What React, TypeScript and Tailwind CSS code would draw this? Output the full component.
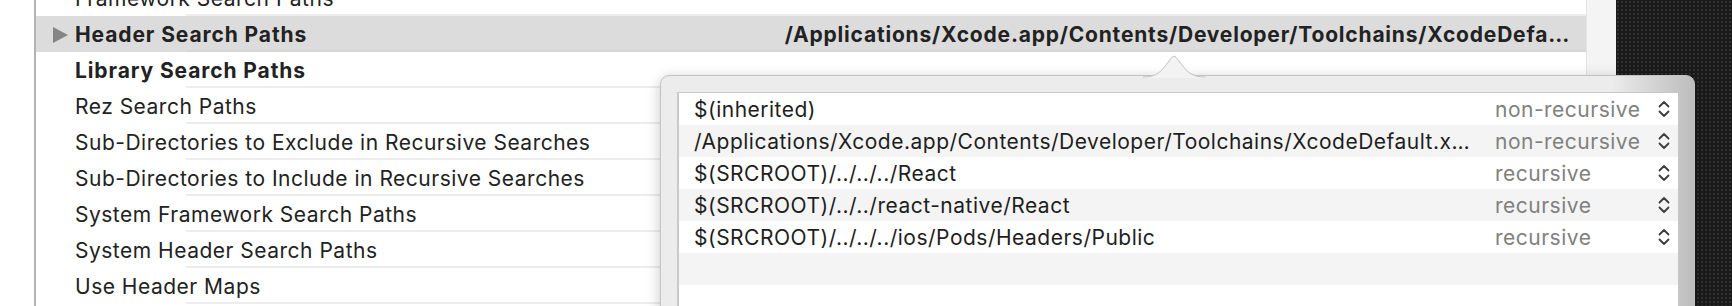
import React from 'react';

type SettingRow = {
  label: string;
  bold?: boolean;
  selected?: boolean;
  value?: string;
};

type PathRow = {
  path: string;
  mode: string;
};

const settings: SettingRow[] = [
  { label: 'Framework Search Paths' },
  {
    label: 'Header Search Paths',
    bold: true,
    selected: true,
    value: '/Applications/Xcode.app/Contents/Developer/Toolchains/XcodeDefa…',
  },
  { label: 'Library Search Paths', bold: true },
  { label: 'Rez Search Paths' },
  { label: 'Sub-Directories to Exclude in Recursive Searches' },
  { label: 'Sub-Directories to Include in Recursive Searches' },
  { label: 'System Framework Search Paths' },
  { label: 'System Header Search Paths' },
  { label: 'Use Header Maps' },
  { label: '' },
];

const paths: PathRow[] = [
  { path: '$(inherited)', mode: 'non-recursive' },
  { path: '/Applications/Xcode.app/Contents/Developer/Toolchains/XcodeDefault.x…', mode: 'non-recursive' },
  { path: '$(SRCROOT)/../../../React', mode: 'recursive' },
  { path: '$(SRCROOT)/../../react-native/React', mode: 'recursive' },
  { path: '$(SRCROOT)/../../../ios/Pods/Headers/Public', mode: 'recursive' },
  { path: '', mode: '' },
  { path: '', mode: '' },
  { path: '', mode: '' },
];

const Stepper: React.FC = () => (
  <svg width="14" height="20" viewBox="0 0 14 20" fill="none">
    <path d="M2.5 7.5L7 3L11.5 7.5" stroke="#3c3c3c" strokeWidth="1.8" strokeLinecap="round" strokeLinejoin="round" />
    <path d="M2.5 12.5L7 17L11.5 12.5" stroke="#3c3c3c" strokeWidth="1.8" strokeLinecap="round" strokeLinejoin="round" />
  </svg>
);

const Disclosure: React.FC = () => (
  <svg width="15" height="16" viewBox="0 0 15 16">
    <path d="M0 0L15 8L0 16Z" fill="#858585" />
  </svg>
);

const PathsPopover: React.FC = () => (
  <div className="absolute left-[660px] top-[75px] h-[250px] w-[1035px] rounded-t-[9px] border border-[#c2c2c2] bg-[linear-gradient(to_right,#ececec_0%,#ececec_92%,#bdbdbd_100%)] px-[16px] pt-[16px] shadow-[0_3px_14px_rgba(0,0,0,0.22)]">
    {/* arrow pointing at the selected row */}
    <svg
      className="absolute left-[482px] top-[-21px]"
      width="62"
      height="23"
      viewBox="0 0 62 23"
    >
      <path
        d="M0 22C12 22 17 18 23 10L29 2.2Q31 0 33 2.2L39 10C45 18 50 22 62 22L62 23L0 23Z"
        fill="#f3f3f3"
      />
      <path
        d="M0 22C12 22 17 18 23 10L29 2.2Q31 0 33 2.2L39 10C45 18 50 22 62 22"
        fill="none"
        stroke="#c2c2c2"
        strokeWidth="1"
      />
    </svg>

    <div className="h-full border-l-[2px] border-t border-[#c9c9c9] bg-white">
      {paths.map((row, i) => (
        <div
          key={i}
          className={`flex h-[32px] items-center text-[21px] tracking-[0.5px] ${i % 2 === 1 ? 'bg-[#f4f4f4]' : 'bg-white'}`}
        >
          <div className="min-w-0 flex-1 whitespace-nowrap pl-[15px] pt-[2px] text-[#1e1e1e]">{row.path}</div>
          <div className="w-[150px] whitespace-nowrap pt-[2px] text-[#808080]">{row.mode}</div>
          <div className="ml-[12px] mr-[7px] flex w-[14px] items-center justify-center">
            {row.mode && <Stepper />}
          </div>
        </div>
      ))}
    </div>
  </div>
);

export default function App() {
  return (
    <div className="relative flex h-[306px] w-[1732px] overflow-hidden bg-white font-[Inter,sans-serif] text-[#222]">
      {/* left gutter */}
      <div className="w-[34px] shrink-0 bg-white" />
      <div className="w-[2px] shrink-0 bg-[#b3b3b3]" />

      {/* build settings table */}
      <div className="-mt-[20px] w-[1550px] shrink-0">
        {settings.map((row, i) => (
          <div key={i} className={`flex h-[36px] flex-col ${row.selected ? 'bg-[#dcdcdc]' : ''}`}>
            <div className="flex h-[34px] items-center pt-[3px] text-[21px]">
              <div className="flex w-[39px] shrink-0 justify-end pr-[7px]">
                {row.selected && <Disclosure />}
              </div>
              <div className={`whitespace-nowrap ${row.bold ? 'font-bold tracking-[0.9px]' : 'tracking-[0.5px]'}`}>
                {row.label}
              </div>
              {row.value && (
                <div className="ml-auto whitespace-nowrap pr-[16px] font-bold tracking-[0.8px]">{row.value}</div>
              )}
            </div>
            <div className={`ml-[150px] h-[2px] ${row.selected ? 'bg-[#d6d6d6]' : 'bg-[#ededed]'}`} />
          </div>
        ))}
      </div>

      {/* inspector edge */}
      <div className="w-[30px] shrink-0 border-l border-[#e4e4e4] bg-[#f4f4f4]" />

      {/* desktop */}
      <div className="flex-1 bg-[#1a1a1a] bg-[radial-gradient(circle,#303030_1px,transparent_1.6px)] bg-size-[4px_4px]" />

      <PathsPopover />
    </div>
  );
}
